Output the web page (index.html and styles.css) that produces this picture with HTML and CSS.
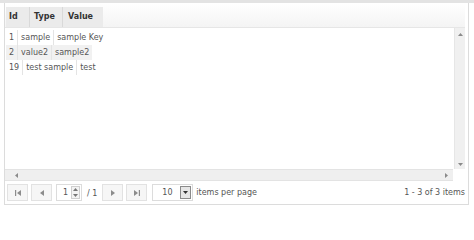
FILE: index.html
```html
<!DOCTYPE html>
<html>
<head>
<meta charset="utf-8">
<link rel="stylesheet" href="styles.css">
</head>
<body>
<div class="topbar"></div>
<div class="grid">
  <div class="grid-header">
    <div class="hcell hid">Id</div><div class="hcell htype">Type</div><div class="hcell hvalue">Value</div>
  </div>
  <div class="grid-body">
    <div class="content">
      <div class="row"><span class="cell">1</span><span class="cell">sample</span><span class="cell">sample Key</span></div>
      <div class="row alt"><span class="cell">2</span><span class="cell">value2</span><span class="cell">sample2</span></div>
      <div class="row"><span class="cell">19</span><span class="cell">test sample</span><span class="cell">test</span></div>
    </div>
    <div class="vscroll">
      <svg class="arrow" width="5" height="3" viewBox="0 0 5 3"><path d="M0 3 L2.5 0 L5 3 Z" fill="#8a8a8a"/></svg>
      <svg class="arrow" width="5" height="3" viewBox="0 0 5 3"><path d="M0 0 L2.5 3 L5 0 Z" fill="#8a8a8a"/></svg>
    </div>
  </div>
  <div class="hscroll-row">
    <div class="hscroll">
      <svg class="arrow" width="3" height="5" viewBox="0 0 3 5"><path d="M3 0 L0 2.5 L3 5 Z" fill="#8a8a8a"/></svg>
      <svg class="arrow" width="3" height="5" viewBox="0 0 3 5"><path d="M0 0 L3 2.5 L0 5 Z" fill="#8a8a8a"/></svg>
    </div>
    <div class="corner"></div>
  </div>
  <div class="pager">
    <div class="pbtn"><svg width="6" height="6" viewBox="0 0 6 6"><rect x="0" y="0" width="1.2" height="6" fill="#8c8c8c"/><path d="M6 0 L2 3 L6 6 Z" fill="#8c8c8c"/></svg></div>
    <div class="pbtn"><svg width="4" height="6" viewBox="0 0 4 6"><path d="M4 0 L0 3 L4 6 Z" fill="#8c8c8c"/></svg></div>
    <div class="pinput"><span class="pnum">1</span><span class="spin"><svg width="5" height="3" viewBox="0 0 5 3"><path d="M0 3 L2.5 0 L5 3 Z" fill="#777"/></svg><svg width="5" height="3" viewBox="0 0 5 3"><path d="M0 0 L2.5 3 L5 0 Z" fill="#777"/></svg></span></div>
    <span class="of">/ 1</span>
    <div class="pbtn"><svg width="4" height="6" viewBox="0 0 4 6"><path d="M0 0 L4 3 L0 6 Z" fill="#8c8c8c"/></svg></div>
    <div class="pbtn"><svg width="6" height="6" viewBox="0 0 6 6"><path d="M0 0 L4 3 L0 6 Z" fill="#8c8c8c"/><rect x="4.8" y="0" width="1.2" height="6" fill="#8c8c8c"/></svg></div>
    <div class="dropdown"><span class="dval">10</span><span class="dbtn"><svg width="5" height="3" viewBox="0 0 5 3"><path d="M0 0 L2.5 3 L5 0 Z" fill="#333"/></svg></span></div>
    <span class="ipp">items per page</span>
    <span class="info">1 - 3 of 3 items</span>
  </div>
</div>
</body>
</html>
```
FILE: styles.css
```css
html, body {
  margin: 0;
  padding: 0;
  background: #fff;
}
body {
  font-family: "DejaVu Sans", sans-serif;
  font-size: 8px;
  color: #555;
  width: 474px;
  height: 207px;
  overflow: hidden;
}
.topbar {
  height: 3px;
  background: #e3e3e3;
}
.grid {
  margin-left: 4px;
  width: 463px;
  border: 1px solid #dcdcdc;
  border-top: none;
  display: flex;
  flex-direction: column;
}
.grid-header {
  display: flex;
  height: 20px;
  padding-top: 4px;
  padding-left: 1px;
  margin-right: 3px;
  background: linear-gradient(to bottom, #ffffff, #f4f4f4);
  border-bottom: 1px solid #e6e6e6;
}
.hcell {
  background: #ebebeb;
  font-weight: bold;
  color: #333;
  line-height: 20px;
  padding-left: 3px;
  box-sizing: border-box;
  border-left: 1px solid #d9d9d9;
}
.hid { width: 23px; border-left: none; }
.htype { width: 33px; padding-left: 4px; }
.hvalue { width: 41px; padding-left: 5px; }
.grid-body {
  display: flex;
  height: 141px;
}
.content {
  flex: 1;
  padding-top: 2px;
  padding-left: 1px;
}
.row {
  display: flex;
  height: 15px;
  line-height: 15px;
  width: max-content;
}
.row.alt {
  background: #f1f1f1;
}
.cell {
  padding: 0 3px;
  border-left: 1px solid #e4e4e4;
}
.cell:first-child {
  border-left: none;
}
.vscroll {
  width: 11px;
  margin-right: 3px;
  background: #f0f0f0;
  border-left: 1px solid #e6e6e6;
  display: flex;
  flex-direction: column;
  justify-content: space-between;
  align-items: center;
  padding: 5px 0 3px;
  box-sizing: border-box;
}
.arrow { display: block; }
.hscroll-row {
  display: flex;
  height: 12px;
}
.hscroll {
  width: 448px;
  background: #efefef;
  border-top: 1px solid #e3e3e3;
  border-bottom: 1px solid #e3e3e3;
  box-sizing: border-box;
  display: flex;
  justify-content: space-between;
  align-items: center;
  padding: 0 5px 0 10px;
}
.corner {
  flex: 1;
  background: #fff;
}
.pager {
  display: flex;
  align-items: center;
  height: 23px;
  padding: 0 3px 0 2px;
}
.pbtn {
  width: 19px;
  height: 15px;
  border: 1px solid #e2e2e2;
  background: #f6f6f6;
  display: flex;
  align-items: center;
  justify-content: center;
  margin-right: 3px;
}
.pinput {
  width: 24px;
  height: 15px;
  border: 1px solid #dcdcdc;
  background: #fff;
  display: flex;
  align-items: center;
  margin-left: 1px;
}
.pnum {
  flex: 1;
  text-align: right;
  padding-right: 3px;
}
.spin {
  width: 7px;
  height: 11px;
  border: 1px solid #cfcfcf;
  background: #f3f3f3;
  display: flex;
  flex-direction: column;
  justify-content: space-around;
  align-items: center;
  margin-right: 1px;
}
.of {
  margin: 2px 5px 0 5px;
}
.dropdown {
  margin-left: 2px;
  width: 39px;
  height: 15px;
  border: 1px solid #dcdcdc;
  background: #fff;
  display: flex;
  align-items: center;
}
.dval {
  flex: 1;
  padding-left: 9px;
}
.dbtn {
  width: 9px;
  height: 11px;
  border: 1px solid #8a8a8a;
  background: #e6e6e6;
  display: flex;
  align-items: center;
  justify-content: center;
  margin-right: 1px;
}
.ipp {
  margin-left: 3px;
}
.info {
  margin-left: auto;
}
```
